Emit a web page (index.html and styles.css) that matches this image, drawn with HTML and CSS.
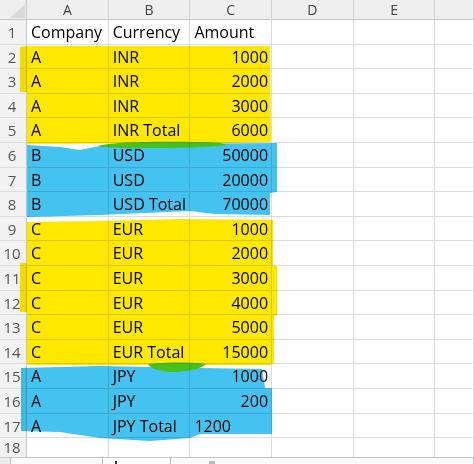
FILE: index.html
```html
<!DOCTYPE html>
<html>
<head>
<meta charset="utf-8">
<link rel="stylesheet" href="styles.css">
</head>
<body>
<div class="sheet">
  <div class="grid">
    <div class="corner"><svg width="27" height="20" viewBox="0 0 27 20"><polygon points="25,4 25,18 10,18" fill="#d9d9d9"/></svg></div>
    <div class="colh">A</div><div class="colh">B</div><div class="colh">C</div><div class="colh">D</div><div class="colh">E</div><div class="colh"></div>

    <div class="rowh">1</div><div class="c">Company</div><div class="c">Currency</div><div class="c">Amount</div><div class="c"></div><div class="c"></div><div class="c"></div>
    <div class="rowh">2</div><div class="c">A</div><div class="c">INR</div><div class="c n">1000</div><div class="c"></div><div class="c"></div><div class="c"></div>
    <div class="rowh">3</div><div class="c">A</div><div class="c">INR</div><div class="c n">2000</div><div class="c"></div><div class="c"></div><div class="c"></div>
    <div class="rowh">4</div><div class="c">A</div><div class="c">INR</div><div class="c n">3000</div><div class="c"></div><div class="c"></div><div class="c"></div>
    <div class="rowh">5</div><div class="c">A</div><div class="c">INR Total</div><div class="c n">6000</div><div class="c"></div><div class="c"></div><div class="c"></div>
    <div class="rowh">6</div><div class="c">B</div><div class="c">USD</div><div class="c n">50000</div><div class="c"></div><div class="c"></div><div class="c"></div>
    <div class="rowh">7</div><div class="c">B</div><div class="c">USD</div><div class="c n">20000</div><div class="c"></div><div class="c"></div><div class="c"></div>
    <div class="rowh">8</div><div class="c">B</div><div class="c">USD Total</div><div class="c n">70000</div><div class="c"></div><div class="c"></div><div class="c"></div>
    <div class="rowh">9</div><div class="c">C</div><div class="c">EUR</div><div class="c n">1000</div><div class="c"></div><div class="c"></div><div class="c"></div>
    <div class="rowh">10</div><div class="c">C</div><div class="c">EUR</div><div class="c n">2000</div><div class="c"></div><div class="c"></div><div class="c"></div>
    <div class="rowh">11</div><div class="c">C</div><div class="c">EUR</div><div class="c n">3000</div><div class="c"></div><div class="c"></div><div class="c"></div>
    <div class="rowh">12</div><div class="c">C</div><div class="c">EUR</div><div class="c n">4000</div><div class="c"></div><div class="c"></div><div class="c"></div>
    <div class="rowh">13</div><div class="c">C</div><div class="c">EUR</div><div class="c n">5000</div><div class="c"></div><div class="c"></div><div class="c"></div>
    <div class="rowh">14</div><div class="c">C</div><div class="c">EUR Total</div><div class="c n">15000</div><div class="c"></div><div class="c"></div><div class="c"></div>
    <div class="rowh">15</div><div class="c">A</div><div class="c">JPY</div><div class="c n">1000</div><div class="c"></div><div class="c"></div><div class="c"></div>
    <div class="rowh">16</div><div class="c">A</div><div class="c">JPY</div><div class="c n">200</div><div class="c"></div><div class="c"></div><div class="c"></div>
    <div class="rowh">17</div><div class="c">A</div><div class="c">JPY Total</div><div class="c">1200</div><div class="c"></div><div class="c"></div><div class="c"></div>
    <div class="rowh last">18</div><div class="c last"></div><div class="c last"></div><div class="c last"></div><div class="c last"></div><div class="c last"></div><div class="c last"></div>
  </div>
  <svg class="marker" width="474" height="457" viewBox="0 0 474 457">
    <path fill="#ffe800" d="M20,47 L27,46 L270,46 L271,142 L230,143 L27,144 L27,92 L20,92 Z"/>
    <path fill="#44c3f0" d="M27,145 L60,147 L80,150 L100,146 L150,144 L277,143 L277,192 L270,193 L270,215 L215,214 L190,211 L100,215 L27,217 Z"/>
    <path fill="#48c01c" d="M98,146 C110,142 150,141 200,142 C215,142 225,143 226,145 C215,147 190,148 150,148 C120,148 105,148 98,146 Z"/>
    <path fill="#ffe800" d="M27,222 L100,221 L180,219 L273,220 L273,266 L277,266 L277,315 L274,316 L274,362 Q273,365 268,365 L27,365 L27,312 L20,312 L20,263 L27,263 Z"/>
    <path fill="#44c3f0" d="M21,368 L100,366 L200,368 L262,369 L265,388 L272,388 L272,434 L200,434 L190,438 L150,441 L100,438 L60,432 L21,431 Z"/>
    <path fill="#48c01c" d="M148,364 C165,362 195,362 206,364 C200,370 185,372 170,372 C158,371 150,368 148,364 Z"/>
  </svg>
</div>
<div class="tabs">
  <div class="tab first"></div>
  <div class="gap"><span class="mark"></span></div>
  <div class="tab rest"><span class="mark light"></span></div>
</div>
</body>
</html>
```

FILE: styles.css
```css
html, body {
  margin: 0;
  padding: 0;
  background: #ffffff;
  overflow: hidden;
}
.sheet {
  position: relative;
  width: 474px;
  height: 457px;
  overflow: hidden;
}
.grid {
  display: grid;
  grid-template-columns: 27px repeat(5, 81.7px) 1fr;
  grid-template-rows: 20px repeat(17, 24.6px) 1fr;
  height: 457px;
  font-family: "Open Sans", sans-serif;
}
.grid > div {
  box-sizing: border-box;
  border-right: 1px solid #dcdcdc;
  border-bottom: 1px solid #dcdcdc;
  white-space: nowrap;
  overflow: visible;
}
.corner {
  background: #efefef;
  border-bottom: 1px solid #c6c6c6 !important;
  border-right: 1px solid #c6c6c6 !important;
  line-height: 0;
}
.colh {
  background: #efefef;
  border-bottom: 1px solid #c6c6c6 !important;
  border-right: 1px solid #d2d2d2 !important;
  color: #444;
  font-size: 14px;
  line-height: 20px;
  text-align: center;
}
.rowh {
  background: #f2f2f2;
  border-right: 1px solid #c6c6c6 !important;
  color: #555;
  font-size: 15px;
  line-height: 25px;
  text-align: center;
  padding-right: 2px;
}
.c {
  color: #000;
  font-size: 16px;
  line-height: 25px;
  padding: 0 4px;
}
.c.n {
  text-align: right;
  padding-right: 3px;
}
.grid > .last {
  border-bottom: none;
  line-height: 17px;
  padding-top: 1px;
}
.marker {
  position: absolute;
  left: 0;
  top: 0;
  mix-blend-mode: multiply;
  pointer-events: none;
}
.tabs {
  display: flex;
  height: 7px;
  background: #ececec;
  border-top: 1px solid #c6c6c6;
  box-sizing: border-box;
}
.tab {
  box-sizing: border-box;
  background: #fafafa;
  border: 1px solid #bdbdbd;
  border-top: none;
  border-bottom: none;
}
.tab.first {
  width: 93px;
  margin-left: 10px;
}
.gap {
  width: 67px;
  background: #ffffff;
}
.tab.rest {
  flex: 1;
}
.mark {
  display: block;
  width: 2px;
  height: 3px;
  background: #333;
  margin: 3px 0 0 12px;
}
.mark.light {
  background: #bbb;
  width: 6px;
  margin-left: 38px;
}
```
